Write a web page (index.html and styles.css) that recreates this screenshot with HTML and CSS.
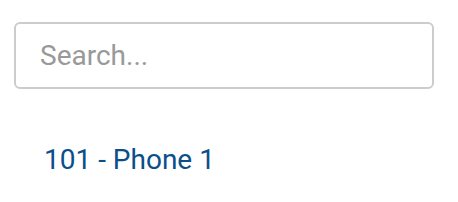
FILE: index.html
```html
<!DOCTYPE html>
<html>
<head>
  <link rel="stylesheet" href="styles.css">
</head>
<body>
  <div class="picker">
    <input type="text" class="search" placeholder="Search...">
    <ul class="results">
      <li><a href="#">101 - Phone 1</a></li>
    </ul>
  </div>
</body>
</html>
```
FILE: styles.css
```css
body{font-family:Roboto,Arial,sans-serif;margin:0;padding:22px 14px}
.picker{width:420px}
.search{box-sizing:border-box;width:100%;height:67px;padding:0 24px;border:2px solid #ccc;border-radius:6px;font-family:Roboto,Arial,sans-serif;font-size:28px;color:#333;outline:none}
.search::placeholder{color:#999}
.results{list-style:none;margin:0;padding:54px 0 0 30px}
.results a{color:#0b4f8a;text-decoration:none;font-size:28px}
```
